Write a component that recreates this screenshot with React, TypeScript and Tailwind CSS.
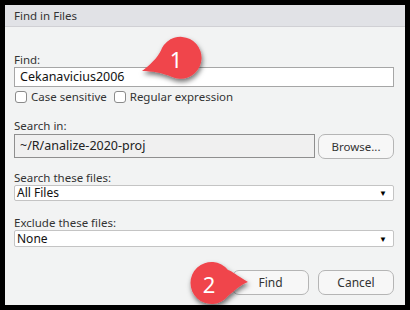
import React from "react";

function Callout({ n, dir }: { n: string; dir: "left" | "right" }) {
  const path =
    dir === "left"
      ? "M 4 39 C 16 30 22 22 24 16 A 21 21 0 1 1 34 45 C 25 41 14 39 4 39 Z"
      : "M 76 25 C 64 18 60 14 56 13 A 21 21 0 1 0 56 39 C 62 34 68 28 76 25 Z";
  return (
    <svg width="80" height="56" viewBox="0 0 80 56" className="overflow-visible">
      <defs>
        <filter id={`sh${n}`} x="-30%" y="-30%" width="160%" height="170%">
          <feDropShadow dx="1" dy="3" stdDeviation="2.5" floodColor="#000" floodOpacity="0.55" />
        </filter>
      </defs>
      <path d={path} fill="#f0454c" filter={`url(#sh${n})`} />
    </svg>
  );
}

export default function App() {
  const font = { fontFamily: '"Noto Sans", "Open Sans", sans-serif' };
  return (
    <div className="w-[410px] h-[310px] bg-black p-[5px] relative" style={font}>
      <div className="w-[400px] h-[300px] bg-[#f2f3f3] flex flex-col text-[12px] text-[#222]">
        <div className="h-[22px] bg-[#e1e2e6] border-b border-[#d0d0d4] pl-[9px] flex items-center text-[11.5px] text-[#333]">
          Find in Files
        </div>
        <div className="pl-[9px] pr-[11px] flex flex-col">
          <div className="mt-[25px] h-[15px] leading-[15px] text-[11.5px] text-[#333]">Find:</div>
          <div className="h-[20px] bg-white border border-[#a6a6a6] flex items-center pl-[5px] text-[12.5px] text-[#111]">
            Cekanavicius2006
          </div>
          <div className="mt-[3px] h-[13px] flex items-center text-[11.5px] text-[#333]">
            <span className="w-[12px] h-[12px] border border-[#8a8a8a] rounded-[3px] bg-white ml-[1px]" />
            <span className="ml-[4px]">Case sensitive</span>
            <span className="w-[12px] h-[12px] border border-[#8a8a8a] rounded-[3px] bg-white ml-[7px]" />
            <span className="ml-[4px]">Regular expression</span>
          </div>
          <div className="mt-[14px] h-[17px] leading-[17px] text-[11.5px] text-[#333]">Search in:</div>
          <div className="h-[25px] flex gap-[3px]">
            <div className="w-[301px] h-[24px] bg-[#f0f0f0] border border-[#8f8f8f] flex items-center pl-[5px] text-[12.5px] text-[#222]">
              ~/R/analize-2020-proj
            </div>
            <div className="flex-1 h-[25px] rounded-[7px] border border-[#b5b5b5] bg-[#f7f7f7] flex items-center justify-center text-[11.5px] text-[#333]">
              Browse...
            </div>
          </div>
          <div className="mt-[11px] h-[15px] leading-[15px] text-[11.5px] text-[#333]">Search these files:</div>
          <div className="h-[16px] bg-white border border-[#c4c4c4] rounded-[2px] flex items-center pl-[2px] pr-[6px] text-[12px] text-[#111]">
            <span className="flex-1">All Files</span>
            <span className="text-[8px] text-black">▼</span>
          </div>
          <div className="mt-[14px] h-[15px] leading-[15px] text-[11.5px] text-[#333]">Exclude these files:</div>
          <div className="h-[17px] bg-white border border-[#c4c4c4] rounded-[2px] flex items-center pl-[2px] pr-[6px] text-[12px] text-[#111]">
            <span className="flex-1">None</span>
            <span className="text-[8px] text-black">▼</span>
          </div>
          <div className="mt-[23px] h-[25px] flex justify-end gap-[9px]">
            <div className="w-[77px] h-[25px] rounded-[7px] border border-[#b5b5b5] bg-[#f7f7f7] flex items-center justify-center text-[12px] text-[#333]">
              Find
            </div>
            <div className="w-[76px] h-[25px] rounded-[7px] border border-[#b5b5b5] bg-[#f7f7f7] flex items-center justify-center text-[12px] text-[#333]">
              Cancel
            </div>
          </div>
        </div>
      </div>
      <div className="absolute left-[138px] top-[32px] w-[80px] h-[56px]">
        <Callout n="1" dir="left" />
        <span className="absolute left-[38px] top-[27px] -translate-x-1/2 -translate-y-1/2 text-white text-[22px] leading-none">1</span>
      </div>
      <div className="absolute left-[172px] top-[257px] w-[80px] h-[56px]">
        <Callout n="2" dir="right" />
        <span className="absolute left-[37px] top-[27px] -translate-x-1/2 -translate-y-1/2 text-white text-[22px] leading-none">2</span>
      </div>
    </div>
  );
}
